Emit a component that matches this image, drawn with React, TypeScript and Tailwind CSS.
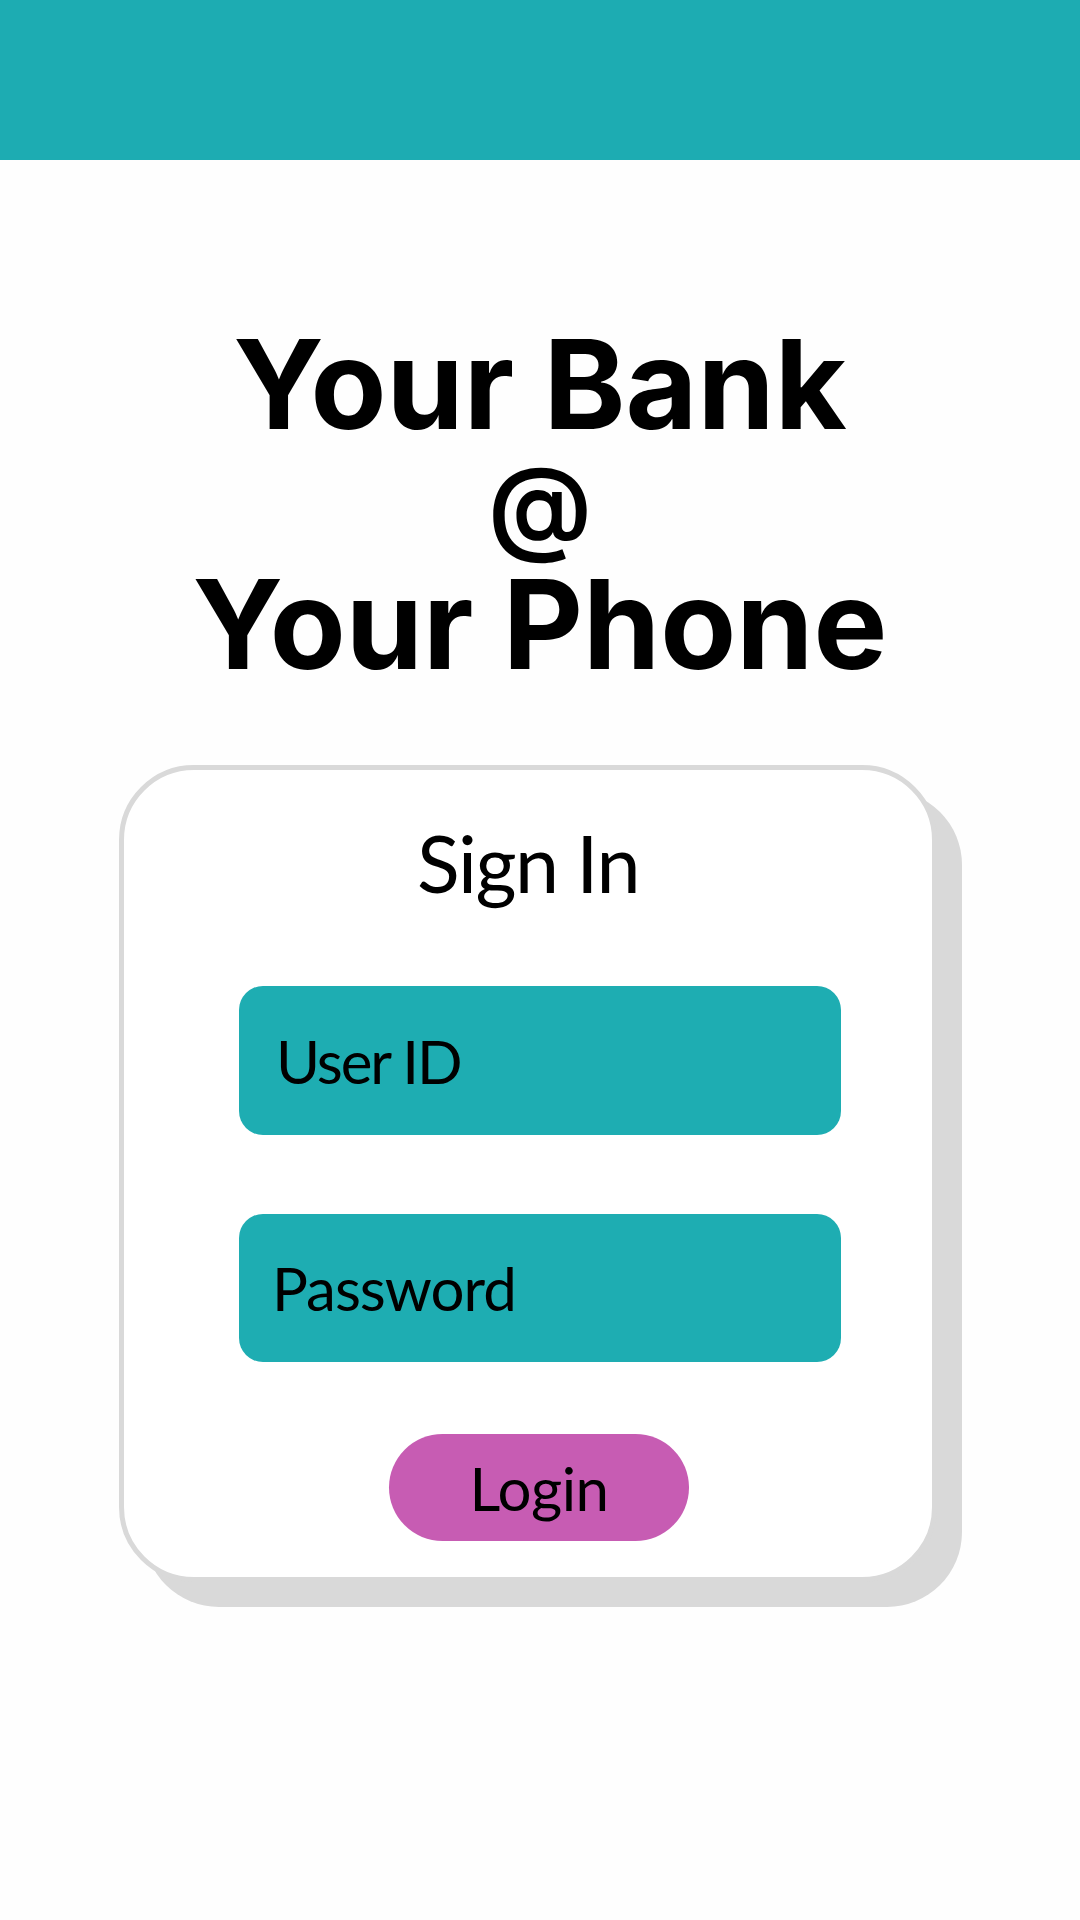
export default function App() {
  return (
    <div className="w-[1080px] min-h-[1920px] bg-[#fefefe] flex flex-col text-black">
      {/* top bar */}
      <div className="h-[160px] w-full bg-[#1dacb2]" />

      {/* headline */}
      <h1 className="mt-[164px] flex flex-col items-center font-['Inter',sans-serif] font-bold">
        <span className="text-[124px] leading-[120px]">Your Bank</span>
        <span className="text-[104px] leading-[120px] font-semibold">@</span>
        <span className="text-[124px] leading-[120px]">Your Phone</span>
      </h1>

      {/* sign in card */}
      <div className="mt-[81px] ml-[119px] w-[818px] h-[817px] bg-white border-[5px] border-[#d9d9d9] rounded-[75px] shadow-[25px_25px_0_0_#d9d9d9] flex flex-col font-['Lato',sans-serif]">
        <h2 className="mt-[53px] text-center text-[79px] leading-none font-normal tracking-[-1.5px]">Sign In</h2>

        <div className="mt-[84px] ml-[115px] w-[602px] h-[149px] bg-[#1eadb2] rounded-[24px] flex items-center pl-[37px]">
          <span className="text-[60px] leading-none tracking-[-2px]">User ID</span>
        </div>

        <div className="mt-[79px] ml-[115px] w-[602px] h-[148px] bg-[#1eadb2] rounded-[24px] flex items-center pl-[33px]">
          <span className="text-[60px] leading-none tracking-[-1px]">Password</span>
        </div>

        <button className="mt-[72px] ml-[265px] w-[300px] h-[107px] bg-[#c75cb3] rounded-full flex items-center justify-center">
          <span className="text-[60px] leading-none tracking-[-0.5px]">Login</span>
        </button>
      </div>
    </div>
  );
}
